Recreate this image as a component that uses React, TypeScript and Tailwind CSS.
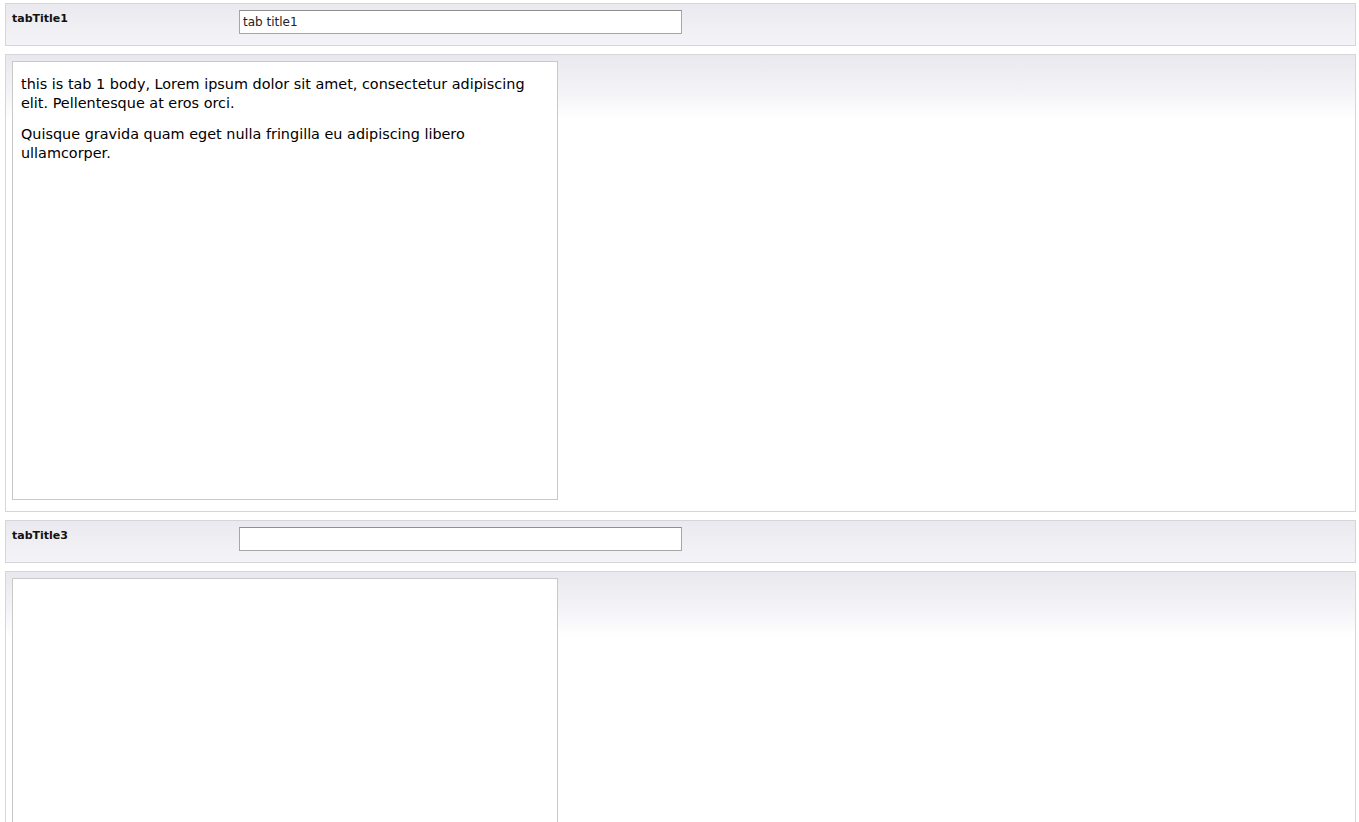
const font = { fontFamily: '"DejaVu Sans", Verdana, sans-serif' };

function HeaderRow({ label, value }: { label: string; value: string }) {
  return (
    <div className="flex h-[43px] shrink-0 border border-[#d6d6d9] bg-gradient-to-b from-[#e9e9ef] to-[#f4f4f8] px-[6px] pt-[6px]">
      <div className="w-[227px] pt-[2px] text-[11px] font-bold leading-[14px] text-[#111]">{label}</div>
      <input
        readOnly
        value={value}
        className="h-[24px] w-[443px] border border-[#a6a6a6] border-t-[#8f8f8f] bg-white px-[3px] text-[12px] text-[#222] outline-none"
        style={font}
      />
    </div>
  );
}

function BodyPanel({ children, open }: { children?: React.ReactNode; open?: boolean }) {
  return (
    <div
      className={`flex shrink-0 border border-[#d6d6d9] bg-[linear-gradient(to_bottom,#e8e8ee_0px,#f3f3f7_35px,#ffffff_65px)] px-[6px] pt-[6px] ${
        open ? "h-[458px] pb-[11px]" : "h-[300px]"
      }`}
    >
      <div className="w-[546px] border border-[#c9c9c9] bg-white pl-[8px] pr-[10px] pt-[13px] text-[14.4px] leading-[19px] text-black">
        {children}
      </div>
    </div>
  );
}

export default function App() {
  return (
    <div className="flex h-[822px] flex-col gap-[8px] overflow-hidden bg-white pl-[5px] pr-[3px] pt-[3px]" style={font}>
      <HeaderRow label="tabTitle1" value="tab title1" />
      <BodyPanel open>
        <p>this is tab 1 body, Lorem ipsum dolor sit amet, consectetur adipiscing elit. Pellentesque at eros orci.</p>
        <p className="mt-[12px]">Quisque gravida quam eget nulla fringilla eu adipiscing libero ullamcorper.</p>
      </BodyPanel>
      <HeaderRow label="tabTitle3" value="" />
      <BodyPanel />
    </div>
  );
}
